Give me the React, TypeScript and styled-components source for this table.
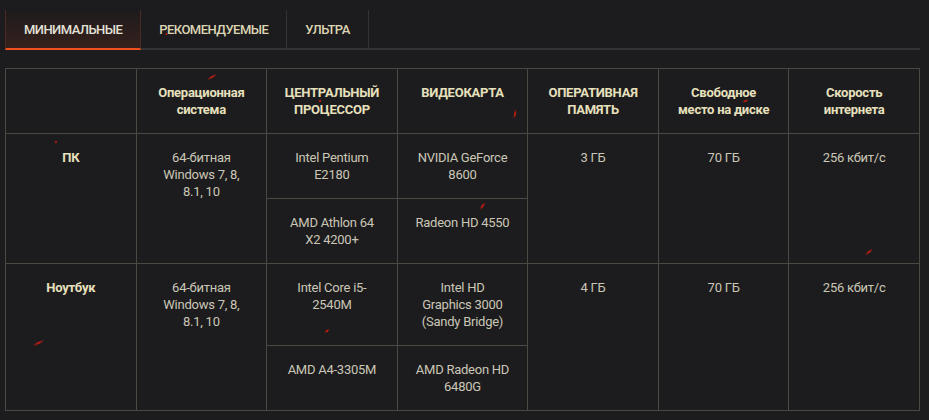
import React from "react";
import styled, { createGlobalStyle } from "styled-components";

const Global = createGlobalStyle`
  html, body { margin: 0; padding: 0; background: #1c1c1e; }
  body { font-family: Roboto, "Liberation Sans", Arial, sans-serif; }
`;

const Page = styled.div`
  position: relative;
  padding: 10px 9px 0 5px;
  min-height: 420px;
  box-sizing: border-box;
  background: #1c1c1e;
  overflow: hidden;
`;

const TabBar = styled.div`
  display: flex;
  border-bottom: 2px solid #333234;
  height: 38px;
`;

const Tab = styled.div<{ $active?: boolean }>`
  display: flex;
  align-items: center;
  padding: 0 18px;
  font-size: 13px;
  font-weight: 500;
  letter-spacing: -0.55px;
  text-transform: uppercase;
  color: ${(p) => (p.$active ? "#e4e1d8" : "#dcd5b3")};
  border-right: 1px solid ${(p) => (p.$active ? "#4a2a22" : "#333234")};
  border-left: ${(p) => (p.$active ? "1px solid #4a2a22" : "none")};
  background: ${(p) =>
    p.$active ? "linear-gradient(180deg, #1d1b1c 0%, #36211d 100%)" : "transparent"};
  ${(p) => (p.$active ? "border-bottom: 2px solid #f1511f; margin-bottom: -2px;" : "")}
`;

const Table = styled.table`
  margin-top: 18px;
  width: 915px;
  table-layout: fixed;
  border-collapse: collapse;
`;

const Cell = styled.td<{ $head?: boolean }>`
  border: 1px solid #4a4943;
  padding: 15px 6px 15px;
  vertical-align: top;
  text-align: center;
  font-size: 13px;
  line-height: 17px;
  letter-spacing: -0.25px;
  white-space: pre-line;
  font-weight: ${(p) => (p.$head ? 700 : 400)};
  color: ${(p) => (p.$head ? "#e7e0bd" : "#cbc7b6")};
`;

const HeadCell = styled(Cell).attrs({ as: "th" })``;

const Spark = styled.div<{ $len: number; $angle: number }>`
  position: absolute;
  width: ${(p) => p.$len}px;
  height: 2px;
  border-radius: 2px;
  background: linear-gradient(90deg, rgba(200, 20, 10, 0) 0%, #d01a0e 50%, rgba(200, 20, 10, 0) 100%);
  transform: rotate(${(p) => p.$angle}deg);
  pointer-events: none;
`;

const headers = [
  "",
  "Операционная\nсистема",
  "ЦЕНТРАЛЬНЫЙ\nПРОЦЕССОР",
  "ВИДЕОКАРТА",
  "ОПЕРАТИВНАЯ\nПАМЯТЬ",
  "Свободное\nместо на диске",
  "Скорость\nинтернета",
];

const rows = [
  {
    name: "ПК",
    os: "64-битная\nWindows 7, 8,\n8.1, 10",
    sub: [
      ["Intel Pentium\nE2180", "NVIDIA GeForce\n8600"],
      ["AMD Athlon 64\nX2 4200+", "Radeon HD 4550"],
    ],
    ram: "3 ГБ",
    disk: "70 ГБ",
    net: "256 кбит/с",
  },
  {
    name: "Ноутбук",
    os: "64-битная\nWindows 7, 8,\n8.1, 10",
    sub: [
      ["Intel Core i5-\n2540M", "Intel HD\nGraphics 3000\n(Sandy Bridge)"],
      ["AMD A4-3305M", "AMD Radeon HD\n6480G"],
    ],
    ram: "4 ГБ",
    disk: "70 ГБ",
    net: "256 кбит/с",
  },
];

const sparks = [
  { x: 206, y: 76, len: 12, a: -30 },
  { x: 54, y: 141, len: 4, a: -30 },
  { x: 318, y: 100, len: 4, a: -60 },
  { x: 510, y: 113, len: 10, a: -80 },
  { x: 478, y: 205, len: 9, a: -55 },
  { x: 742, y: 100, len: 7, a: -20 },
  { x: 864, y: 251, len: 10, a: -40 },
  { x: 32, y: 342, len: 13, a: -25 },
  { x: 324, y: 330, len: 6, a: -35 },
  { x: 165, y: 33, len: 3, a: 0 },
];

export default function App() {
  return (
    <Page>
      <Global />
      <TabBar>
        <Tab $active>Минимальные</Tab>
        <Tab>Рекомендуемые</Tab>
        <Tab>Ультра</Tab>
      </TabBar>
      <Table>
        <thead>
          <tr>
            {headers.map((h, i) => (
              <HeadCell key={i} $head>
                {h}
              </HeadCell>
            ))}
          </tr>
        </thead>
        <tbody>
          {rows.map((r) => (
            <React.Fragment key={r.name}>
              <tr>
                <Cell $head rowSpan={2}>{r.name}</Cell>
                <Cell rowSpan={2}>{r.os}</Cell>
                <Cell>{r.sub[0][0]}</Cell>
                <Cell>{r.sub[0][1]}</Cell>
                <Cell rowSpan={2}>{r.ram}</Cell>
                <Cell rowSpan={2}>{r.disk}</Cell>
                <Cell rowSpan={2}>{r.net}</Cell>
              </tr>
              <tr>
                <Cell>{r.sub[1][0]}</Cell>
                <Cell>{r.sub[1][1]}</Cell>
              </tr>
            </React.Fragment>
          ))}
        </tbody>
      </Table>
      {sparks.map((s, i) => (
        <Spark key={i} $len={s.len} $angle={s.a} style={{ left: s.x, top: s.y }} />
      ))}
    </Page>
  );
}
